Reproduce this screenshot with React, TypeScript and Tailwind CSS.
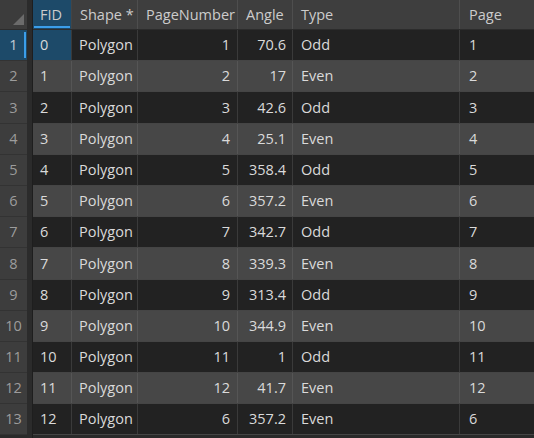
const rows: [number, number, string, string][] = [
  [1, 70.6, "Odd", "1"],
  [2, 17, "Even", "2"],
  [3, 42.6, "Odd", "3"],
  [4, 25.1, "Even", "4"],
  [5, 358.4, "Odd", "5"],
  [6, 357.2, "Even", "6"],
  [7, 342.7, "Odd", "7"],
  [8, 339.3, "Even", "8"],
  [9, 313.4, "Odd", "9"],
  [10, 344.9, "Even", "10"],
  [11, 1, "Odd", "11"],
  [12, 41.7, "Even", "12"],
  [6, 357.2, "Even", "6"],
];

const cell = "h-full flex items-center border-r border-[#3a3a3a] shrink-0";

export default function App() {
  return (
    <div
      className="w-[534px] h-[438px] bg-[#2a2a2a] text-[14.5px] text-[#dadada] flex overflow-hidden"
      style={{ fontFamily: '"Segoe UI", "Open Sans", sans-serif' }}
    >
      {/* row headers */}
      <div className="w-[27px] shrink-0 flex flex-col">
        <div className="h-[30px] bg-[#3c3c3c] border-b border-[#2c2c2c] relative">
          <div className="absolute right-[3px] bottom-[4px] w-0 h-0 border-l-[11px] border-l-transparent border-b-[11px] border-b-[#6b6b6b]" />
        </div>
        {rows.map((_, i) => (
          <div
            key={i}
            className={`h-[31.2px] shrink-0 flex items-center justify-center border-b border-[#333333] relative ${
              i === 0 ? "bg-[#1d4a69] text-[#c0ccd6]" : "bg-[#3d3d3d] text-[#9c9c9c]"
            }`}
          >
            {i + 1}
            {i === 0 && <div className="absolute right-[1px] top-[2px] bottom-[2px] w-[2px] bg-[#3b9eea]" />}
          </div>
        ))}
      </div>
      <div className="w-[6px] shrink-0 bg-[#2b2b2b] border-r border-[#1e1e1e]" />

      {/* table */}
      <div className="flex-1 flex flex-col">
        <div className="h-[30px] shrink-0 flex bg-[#3e3e3e] border-b border-[#2c2c2c] text-[#cccccc]">
          <div className={`${cell} w-[39px] pl-[7px] bg-[#1d4a69] relative border-[#444444]`}>
            FID
            <div className="absolute left-[1px] right-[1px] bottom-[1px] h-[2px] bg-[#3b9eea]" />
          </div>
          <div className={`${cell} w-[66px] pl-[8px] border-[#4e4e4e]`}>Shape *</div>
          <div className={`${cell} w-[100px] pl-[8px] border-[#4e4e4e]`}>PageNumber</div>
          <div className={`${cell} w-[55px] pl-[8px] border-[#4e4e4e]`}>Angle</div>
          <div className={`${cell} w-[167px] pl-[8px] border-[#4e4e4e]`}>Type</div>
          <div className={`${cell} flex-1 pl-[9px] border-r-0`}>Page</div>
        </div>
        {rows.map(([pn, angle, type, page], i) => {
          const light = i % 2 === 1;
          const bg = light ? "bg-[#474747]" : "bg-[#222222]";
          const sep = light ? "border-[#555555]" : "border-[#3a3a3a]";
          return (
            <div
              key={i}
              className={`h-[31.2px] shrink-0 flex border-b border-[#454545] ${bg}`}
            >
              <div className={`${cell} ${sep} w-[39px] pl-[7px] ${i === 0 ? "bg-[#1d4a69]" : ""}`}>{i}</div>
              <div className={`${cell} ${sep} w-[66px] pl-[7px]`}>Polygon</div>
              <div className={`${cell} ${sep} w-[100px] pr-[7px] justify-end`}>{pn}</div>
              <div className={`${cell} ${sep} w-[55px] pr-[6px] justify-end`}>{angle}</div>
              <div className={`${cell} ${sep} w-[167px] pl-[8px]`}>{type}</div>
              <div className={`${cell} flex-1 pl-[9px] border-r-0`}>{page}</div>
            </div>
          );
        })}
      </div>
    </div>
  );
}
